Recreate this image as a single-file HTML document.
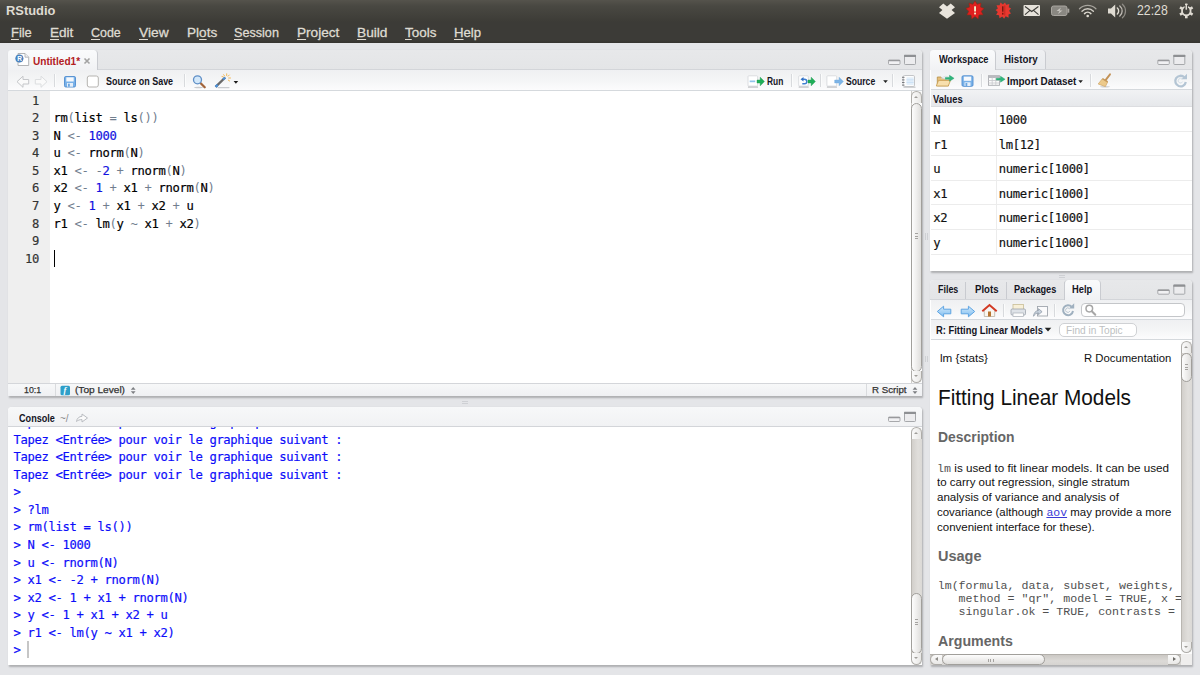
<!DOCTYPE html>
<html><head><meta charset="utf-8"><title>RStudio</title>
<style>
*{box-sizing:border-box;margin:0;padding:0}
html,body{width:1200px;height:675px;overflow:hidden}
body{background:#e4e5e8;font-family:"Liberation Sans",sans-serif;position:relative;color:#000}
.abs{position:absolute}
#top{left:0;top:0;width:1200px;height:42.700px;background:linear-gradient(#55534c 0,#494842 6px,#3d3c37 21px,#3c3b37 22px,#3c3b37 40px,#34332f 100%)}
#title{left:5.800px;top:2.500px;font-weight:bold;font-size:12.8px;line-height:15px;color:#dfdbd2;white-space:nowrap;display:inline-block}
.menu{top:24.500px;font-size:13.2px;line-height:15px;color:#dfdbd2;white-space:nowrap;display:inline-block;-webkit-text-stroke:.3px #dfdbd2}
.menu u{text-decoration:underline;text-underline-offset:2px}
.pane{background:#fff;border-radius:4px 4px 0 0;box-shadow:1px 1.500px 2px rgba(0,0,0,.24)}
.hdr{left:0;top:0;right:0;height:19.500px;background:linear-gradient(#e7e8ea,#e4e5e7);border-radius:4px 4px 0 0;border-bottom:1px solid #d3d5d9}
.tab{top:0;height:20px;background:linear-gradient(#fafbfc,#f1f2f4);border-radius:4px 4px 0 0;border-right:1px solid #c9cbd0;font-weight:bold;font-size:10.5px;white-space:nowrap;line-height:19px}
.itab{top:2px;height:17px;font-weight:bold;font-size:10.5px;white-space:nowrap;line-height:16px;border-right:1px solid #c9cbd0}
.tb{left:0;right:0;background:linear-gradient(#eff0f2,#f4f5f6 50%,#fcfcfd);border-bottom:1px solid #d5d9dd}
.tbt{font-weight:bold;font-size:10.3px;white-space:nowrap;display:inline-block;line-height:12px;margin-top:0px;color:#14141e}
.sep{width:2px;background:linear-gradient(to right,#d8dadd 50%,#fbfcfc 50%)}
.mono{font-family:"DejaVu Sans Mono","Liberation Mono",monospace}
.code{font-family:"DejaVu Sans Mono","Liberation Mono",monospace;font-size:12.2px;letter-spacing:-0.345px;white-space:pre;line-height:17.55px;-webkit-text-stroke:.18px currentColor}
.ht{font-size:11.6px;line-height:14px;white-space:nowrap;display:inline-block;color:#111}
.hh{font-weight:bold;font-size:14.5px;line-height:17px;color:#666}
.hc{font-family:"Liberation Mono",monospace;font-size:11.63px}
.hcode{white-space:pre;line-height:13.1px;color:#505050}
.vtrack{width:11px;background:linear-gradient(to right,#d2cfcb,#e0dedb 60%,#dbd9d6);border-left:1px solid #b9b6b1}
.vthumb{width:11px;background:linear-gradient(to right,#fdfdfd,#efeeed 50%,#dfdedc);border:1px solid #a19f9b;border-radius:5.5px}
.vbtn{width:11px;height:12px;background:linear-gradient(to right,#fbfbfb,#e9e8e6);border:1px solid #aeaca8}
.vbtn.up{border-radius:5.5px 5.5px 0 0;border-bottom:none}
.vbtn.dn{border-radius:0 0 5.5px 5.5px;border-top:none}
.grip{width:3px;height:7px;background:linear-gradient(#a5a3a0 0,#a5a3a0 1px,transparent 1px,transparent 2.700px,#a5a3a0 2.700px,#a5a3a0 3.700px,transparent 3.700px,transparent 5.400px,#a5a3a0 5.400px,#a5a3a0 6.400px,transparent 6.400px)}
.arr{width:0;height:0;border-left:2.500px solid transparent;border-right:2.500px solid transparent}
.arr.u{border-bottom:2.600px solid #a09e9a}
.arr.d{border-top:2.600px solid #a09e9a}
.sbt{font-size:9.6px;line-height:12px;white-space:nowrap;display:inline-block;color:#333;-webkit-text-stroke:.25px #333}
.num{color:#1212e0}
.op{color:#717e8e;-webkit-text-stroke:0}
.cons{color:#0d0dfa}
</style></head><body>

<div id="top" class="abs"></div>
<div id="title" class="abs" style="transform-origin:0 50%;transform:scaleX(1.0072);">RStudio</div>
<div class="abs menu" style="transform-origin:0 50%;transform:scaleX(0.9781);left:11.2px"><u>F</u>ile</div>
<div class="abs menu" style="transform-origin:0 50%;transform:scaleX(1.0293);left:50.3px"><u>E</u>dit</div>
<div class="abs menu" style="transform-origin:0 50%;transform:scaleX(0.9446);left:91.4px"><u>C</u>ode</div>
<div class="abs menu" style="transform-origin:0 50%;transform:scaleX(1.0437);left:139.3px"><u>V</u>iew</div>
<div class="abs menu" style="transform-origin:0 50%;transform:scaleX(1.0292);left:187.2px">Pl<u>o</u>ts</div>
<div class="abs menu" style="transform-origin:0 50%;transform:scaleX(0.9569);left:234.3px"><u>S</u>ession</div>
<div class="abs menu" style="transform-origin:0 50%;transform:scaleX(1.0330);left:296.9px"><u>P</u>roject</div>
<div class="abs menu" style="transform-origin:0 50%;transform:scaleX(1.0400);left:356.9px"><u>B</u>uild</div>
<div class="abs menu" style="transform-origin:0 50%;transform:scaleX(1.0196);left:404.6px"><u>T</u>ools</div>
<div class="abs menu" style="transform-origin:0 50%;transform:scaleX(0.9985);left:453.8px"><u>H</u>elp</div>
<div class="abs" style="transform-origin:0 50%;transform:scaleX(0.8919);left:1136.600px;top:2.500px;font-size:13.8px;line-height:16px;color:#dfdbd2;display:inline-block;white-space:nowrap">22:28</div>
<svg class="abs" style="left:936px;top:0" width="264" height="22" viewBox="936 0 264 22">
  <!-- dropbox -->
  <path d="M939 7.200L943.300 3.500L947 6.400L950.700 3.500L955 7.200L951.600 10.100L955 13L947 18.700L939 13L942.400 10.100Z" fill="#e8e4dc"/>
  <!-- red burst 1 -->
  <path d="M975.0 0.9L977.2 4.3L981.0 3.1L980.5 7.0L984.2 8.6L981.2 11.3L983.1 14.8L979.0 15.0L978.2 18.9L975.0 16.5L971.8 18.9L971.0 15.0L966.9 14.9L968.8 11.3L965.8 8.6L969.5 7.1L969.0 3.1L972.8 4.3z" fill="#de1f1f" stroke="#8c2a14" stroke-width=".6"/>
  <rect x="974.100" y="6.300" width="1.900" height="5.200" fill="#f4ecc9"/><rect x="974.100" y="12.600" width="1.900" height="1.800" fill="#f4ecc9"/>
  <!-- red burst 2 -->
  <path d="M1005.0 2.4L1006.2 4.8L1009.4 4.0L1008.7 7.3L1011.1 8.6L1009.1 10.8L1011.0 13.4L1008.5 14.4L1008.6 17.7L1005.6 16.3L1004.1 18.7L1002.3 16.5L999.5 18.2L999.0 15.3L996.1 14.8L997.8 11.9L995.6 10.0L997.8 8.4L996.5 5.2L999.6 5.3L1000.5 2.6L1002.9 4.5z" fill="#e8382f"/>
  <rect x="1002" y="6.300" width="1.500" height="5.400" fill="#7a1a12"/><rect x="1002" y="12.800" width="1.500" height="1.800" fill="#7a1a12"/>
  <rect x="1004.200" y="5.500" width="1.100" height="10" fill="#c92a22"/>
  <!-- mail -->
  <rect x="1023.500" y="5" width="16.500" height="11" rx="1" fill="#e6e2da"/>
  <path d="M1025 6.500l6.700 5 6.700-5M1025 14.700l4.700-4M1038.500 14.700l-4.700-4" stroke="#3c3b37" stroke-width="1.100" fill="none"/>
  <!-- battery -->
  <rect x="1051.500" y="6" width="15.500" height="9.500" rx="2" fill="#8a8882" stroke="#a9a6a0" stroke-width="1"/>
  <rect x="1067.500" y="8.700" width="1.800" height="4" fill="#a9a6a0"/>
  <path d="M1061 7.500l-4.500 3.500h3l-1.500 3 4.500-3.500h-3z" fill="#c9c6c0"/>
  <!-- wifi -->
  <g fill="none" stroke="#dfdbd2" stroke-linecap="round">
   <path d="M1079.500 8.800a11.500 11.500 0 0 1 16.400 0" stroke-width="1.300" stroke="#a7a49d"/>
   <path d="M1082 11.200a8 8 0 0 1 11.400 0" stroke-width="1.400" stroke="#cfcbc3"/>
   <path d="M1084.500 13.600a4.600 4.600 0 0 1 6.400 0" stroke-width="1.500"/>
  </g>
  <circle cx="1087.700" cy="16" r="1.300" fill="#dfdbd2"/>
  <!-- volume -->
  <path d="M1108 8.500h3l4.200-4v13l-4.200-4h-3z" fill="#dfdbd2"/>
  <g fill="none" stroke-linecap="round">
   <path d="M1117.300 8a4 4 0 0 1 0 6" stroke="#dfdbd2" stroke-width="1.400"/>
   <path d="M1119.800 6a6.500 6.500 0 0 1 0 10" stroke="#c0bcb5" stroke-width="1.300"/>
   <path d="M1122.400 4.200a9 9 0 0 1 0 13.600" stroke="#8f8c86" stroke-width="1.200"/>
  </g>
  <!-- gear/power -->
  <g transform="translate(1186.300,11)">
   <g fill="#dfdbd2"><rect x="-1.300" y="-7.300" width="2.600" height="4"/>
   <g transform="rotate(60)"><rect x="-1.300" y="-7.300" width="2.600" height="3.500"/></g>
   <g transform="rotate(120)"><rect x="-1.300" y="-7.300" width="2.600" height="3.500"/></g>
   <g transform="rotate(180)"><rect x="-1.300" y="-7.300" width="2.600" height="3.500"/></g>
   <g transform="rotate(240)"><rect x="-1.300" y="-7.300" width="2.600" height="3.500"/></g>
   <g transform="rotate(300)"><rect x="-1.300" y="-7.300" width="2.600" height="3.500"/></g></g>
   <circle r="4.300" fill="none" stroke="#dfdbd2" stroke-width="1.800"/>
   <rect x="-1.700" y="-6" width="3.400" height="5" fill="#3f3e39"/>
   <rect x="-.8" y="-7.300" width="1.600" height="6" fill="#dfdbd2"/>
  </g>
</svg>

<div class="abs" style="left:462px;top:401px;width:6px;height:4px;background:repeating-linear-gradient(#c9cbcf 0,#c9cbcf 1px,transparent 1px,transparent 2px);opacity:.8"></div>
<div class="abs" style="left:1059px;top:274.500px;width:6px;height:4px;background:repeating-linear-gradient(#c9cbcf 0,#c9cbcf 1px,transparent 1px,transparent 2px);opacity:.8"></div>
<div class="abs" style="left:925px;top:233px;width:3px;height:7px;background:repeating-linear-gradient(to right,#c9cbcf 0,#c9cbcf 1px,transparent 1px,transparent 2px);opacity:.8"></div>
<div class="abs" style="left:925px;top:356px;width:3px;height:6px;background:repeating-linear-gradient(to right,#c9cbcf 0,#c9cbcf 1px,transparent 1px,transparent 2px);opacity:.8"></div>
<!-- SOURCE PANE -->
<div id="src" class="abs pane" style="left:8px;top:50px;width:914px;height:346px">
  <div class="abs hdr"></div>
  <div class="abs tab" style="left:0;width:90px"></div>
  <div class="abs tbt" style="transform-origin:0 50%;transform:scaleX(0.9800);left:24.600px;top:5.600px;color:#b3201f">Untitled1*</div>
  <div class="abs tb" style="top:20px;height:21px"></div>
  <div class="abs tbt" style="transform-origin:0 50%;transform:scaleX(0.8684);left:97.500px;top:25.500px">Source on Save</div>
  <div class="abs tbt" style="transform-origin:0 50%;transform:scaleX(0.8144);left:759px;top:25.500px">Run</div>
  <div class="abs tbt" style="transform-origin:0 50%;transform:scaleX(0.8362);left:838px;top:25.500px">Source</div>
  <div class="abs sep" style="left:46px;top:24px;height:13px"></div>
  <div class="abs sep" style="left:176px;top:24px;height:13px"></div>
  <div class="abs sep" style="left:783px;top:24px;height:13px"></div>
  <div class="abs sep" style="left:812px;top:24px;height:13px"></div>
  <div class="abs sep" style="left:884px;top:24px;height:13px"></div>
  <svg class="abs" style="left:0;top:0" width="914" height="42" viewBox="8 50 914 42">
    <!-- tab doc icon -->
    <path d="M18 53.500h7l3.700 3.700v8.300h-10.700z" fill="#fff" stroke="#a9abae" stroke-width=".9"/>
    <path d="M25 53.500v3.700h3.700" fill="#eef0f2" stroke="#a9abae" stroke-width=".8"/>
    <circle cx="19.400" cy="58.500" r="3.800" fill="#4a86c5" stroke="#3a6ea8" stroke-width=".5"/>
    <text x="17.300" y="61" font-family="Liberation Sans,sans-serif" font-weight="bold" font-size="6.500" fill="#fff">R</text>
    <!-- tab close x -->
    <path d="M84.500 58.500l5 5M89.500 58.500l-5 5" stroke="#a3a3a3" stroke-width="1.600"/>
    <!-- back / fwd arrows -->
    <path d="M17 81.700l6-5.500v3.300h5.700v4.500h-5.700v3.300z" fill="#fafafa" stroke="#c4c6c9" stroke-width="1"/>
    <path d="M47 81.700l-6-5.500v3.300h-5.700v4.500h5.700v3.300z" fill="#fafafa" stroke="#dcdee0" stroke-width="1"/>
    <!-- save -->
    <g id="floppy">
    <rect x="64.500" y="76.500" width="11" height="10.500" rx="1.300" fill="#79b1e8" stroke="#4f8ccf" stroke-width=".9"/>
    <rect x="66.300" y="77.300" width="7.400" height="4.200" fill="#f6f9fd"/>
    <rect x="67" y="83" width="6" height="3.700" fill="#e6eff9"/>
    <rect x="68" y="83.700" width="1.800" height="3" fill="#6aa5e0"/>
    </g>
    <!-- checkbox -->
    <rect x="87.300" y="76" width="11" height="11" rx="2" fill="#fff" stroke="#b5b3b0" stroke-width="1"/>
    <!-- magnifier -->
    <ellipse cx="198.500" cy="87.500" rx="4.500" ry=".8" fill="#c9cbce"/>
    <path d="M200.700 83.200l4 4" stroke="#a2643a" stroke-width="2.300" stroke-linecap="round"/>
    <circle cx="197.500" cy="79.800" r="4" fill="#d3e8fa" stroke="#5f8fc6" stroke-width="1.300"/>
    <!-- wand -->
    <path d="M218 87.600h11" stroke="#c9cbce" stroke-width="1.200" stroke-linecap="round"/>
    <path d="M215.600 86.800l9.600-9.300" stroke="#6a6a6a" stroke-width="2.400"/>
    <path d="M215.600 86.800l2-1.900M223.200 79.400l2-1.900" stroke="#4a90da" stroke-width="2.400"/>
    <g stroke="#f0b145" stroke-width=".9" stroke-linecap="round">
      <path d="M226.700 73.800v1.800M229.300 75l-1.200 1.200M230.500 78h-1.800M223.600 74.700l1 1.300M229.600 81l-1.300-.9M222 76.500l1.300.4"/>
    </g>
    <path d="M233.600 81h4.600l-2.300 2.700z" fill="#1a1a1a"/>
    <!-- min/max -->
    <g id="minmax">
    <rect x="888.500" y="60.300" width="11.500" height="4.200" rx="1" fill="#f1f1f3" stroke="#a7a8ab" stroke-width="1"/>
    <rect x="888.300" y="59.800" width="11.900" height="1.500" rx=".6" fill="#98999c"/>
    <rect x="904.500" y="55.500" width="11" height="9" rx=".8" fill="#ececee" stroke="#a6a8ab" stroke-width="1"/>
    <rect x="904" y="54.700" width="12" height="2.300" rx=".5" fill="#8e9093"/>
    </g>
    <!-- run -->
    <path d="M748.500 87h9" stroke="#a9abaf" stroke-width="1.200" stroke-linecap="round"/>
    <rect x="748" y="75.800" width="9.600" height="10.300" rx=".8" fill="#fff" stroke="#d3d5d9" stroke-width=".8"/>
    <rect x="749.700" y="80.500" width="5.500" height="1.700" fill="#8fc3ea"/>
    <path d="M757 80h3.200v-2.800l4.200 4.300-4.200 4.300v-2.800h-3.200z" fill="#1fae58" stroke="#159347" stroke-width=".4"/>
    <!-- rerun -->
    <path d="M799.200 87h9" stroke="#a9abaf" stroke-width="1.200" stroke-linecap="round"/>
    <rect x="798.700" y="75.800" width="9.600" height="10.300" rx=".8" fill="#fff" stroke="#d3d5d9" stroke-width=".8"/>
    <path d="M802.300 83.800h2.200a2.300 2.300 0 0 0 0-4.600h-1.800" fill="none" stroke="#3f7fd0" stroke-width="1.400"/>
    <path d="M803.500 77l-3 2.200 3 2.200z" fill="#2f6fc4"/>
    <path d="M808 80h3.200v-2.800l4.200 4.300-4.200 4.300v-2.800h-3.200z" fill="#1fae58" stroke="#159347" stroke-width=".4"/>
    <!-- source -->
    <path d="M827.400 87h9" stroke="#a9abaf" stroke-width="1.200" stroke-linecap="round"/>
    <rect x="826.900" y="75.800" width="9.800" height="10.300" rx=".8" fill="#fff" stroke="#d3d5d9" stroke-width=".8"/>
    <path d="M834.700 80h4.400v-2.800l4.300 4.300-4.300 4.300v-2.800h-4.400z" fill="#7db4e6" stroke="#6ea8dc" stroke-width=".4"/>
    <path d="M883.200 80.300h4.600l-2.300 2.800z" fill="#222"/>
    <!-- notebook -->
    <path d="M904 87.200h11" stroke="#c3c5c8" stroke-width="1.200" stroke-linecap="round"/>
    <rect x="903.200" y="75.500" width="11.300" height="11" rx="1.300" fill="#fdfdfd" stroke="#bdbfc3" stroke-width=".9"/>
    <rect x="906.500" y="77.300" width="7.200" height="7.700" fill="#e3effa"/>
    <path d="M906.500 79.800h7.200M906.500 82.400h7.200" stroke="#c5dcf2" stroke-width=".8"/>
    <path d="M902 77.300h2.500M902 79.900h2.500M902 82.500h2.500M902 85.100h2.500" stroke="#77797d" stroke-width="1"/>
  </svg>
  <div class="abs" style="left:0;top:41px;width:42px;height:292px;background:#efefef"></div>
  <div class="abs code" style="left:0;top:42.700px;width:31px;text-align:right;color:#333">1
2
3
4
5
6
7
8
9
10</div>
  <div class="abs code" style="left:45.600px;top:42.700px">
rm<span class="op">(</span>list <span class="op">=</span> ls<span class="op">())</span>
N <span class="op">&lt;-</span> <span class="num">1000</span>
u <span class="op">&lt;-</span> rnorm<span class="op">(</span>N<span class="op">)</span>
x1 <span class="op">&lt;-</span> <span class="op">-</span><span class="num">2</span> <span class="op">+</span> rnorm<span class="op">(</span>N<span class="op">)</span>
x2 <span class="op">&lt;-</span> <span class="num">1</span> <span class="op">+</span> x1 <span class="op">+</span> rnorm<span class="op">(</span>N<span class="op">)</span>
y <span class="op">&lt;-</span> <span class="num">1</span> <span class="op">+</span> x1 <span class="op">+</span> x2 <span class="op">+</span> u
r1 <span class="op">&lt;-</span> lm<span class="op">(</span>y <span class="op">~</span> x1 <span class="op">+</span> x2<span class="op">)</span>

</div>
  <div class="abs" style="left:46px;top:200px;width:1px;height:17px;background:#000"></div>
  <div class="abs vtrack" style="left:903px;top:41px;height:292px;background:#fbfbfb;border-left-color:#cfcdca"></div>
  <div class="abs vbtn up" style="left:903px;top:41px"></div><div class="abs arr u" style="left:906px;top:46px"></div>
  <div class="abs vthumb" style="left:903px;top:52.500px;height:269px"></div>
  <div class="abs grip" style="left:907px;top:183px"></div>
  <div class="abs vbtn dn" style="left:903px;top:321px"></div><div class="abs arr d" style="left:906px;top:325px"></div>
  <div class="abs" style="left:0;top:333px;right:0;height:13px;background:linear-gradient(#f7f8f9,#eff0f3);border-top:1px solid #d4d6da"></div>
  <div class="abs sbt" style="transform-origin:0 50%;transform:scaleX(0.9204);left:15.600px;top:334.300px">10:1</div>
  <div class="abs" style="left:47px;top:334px;height:12px;width:1px;background:#d9dbde"></div>
  <div class="abs sbt" style="transform-origin:0 50%;transform:scaleX(1.0533);left:67px;top:334.300px">(Top Level)</div>
  <div class="abs" style="left:858px;top:334px;height:12px;width:1px;background:#d9dbde"></div>
  <div class="abs sbt" style="transform-origin:0 50%;transform:scaleX(1.0110);left:863.500px;top:334.300px">R Script</div>
  <svg class="abs" style="left:0;top:333px" width="914" height="14" viewBox="8 383 914 14">
    <rect x="60.500" y="385.700" width="9.500" height="9.500" rx="1.500" fill="#2e9fc9"/>
    <text x="63.500" y="393.300" font-family="Liberation Serif,serif" font-style="italic" font-weight="bold" font-size="8.500" fill="#fff">f</text>
    <path d="M130.800 389.700h4.800l-2.400-2.700z M130.800 391.300h4.800l-2.400 2.700z" fill="#7d7f83"/>
    <path d="M912.600 389.700h4.800l-2.400-2.700z M912.600 391.300h4.800l-2.400 2.700z" fill="#7d7f83"/>
  </svg>
</div>

<!-- CONSOLE PANE -->
<div id="con" class="abs pane" style="left:8px;top:407px;width:914px;height:258px">
  <div class="abs hdr" style="background:linear-gradient(#f7f8f9,#f1f2f4)"></div>
  <div class="abs tbt" style="transform-origin:0 50%;transform:scaleX(0.8837);left:10.600px;top:6.2px">Console</div>
  <div class="abs tbt" style="transform-origin:0 50%;transform:scaleX(0.9690);left:52px;top:6.2px;font-weight:normal;color:#8a8a8a">~/</div>
  <svg class="abs" style="left:0;top:0" width="914" height="20" viewBox="8 407 914 20">
    <g transform="translate(0,357)"><use href="#minmax"/></g>
    <path d="M76.500 421.500c.5-3.300 2.600-5 5.500-5.200v-2.300l5.500 4-5.500 4v-2.400c-2.300 0-4 .5-5.500 1.900z" fill="#fbfbfb" stroke="#b9bcc1" stroke-width="1"/>
  </svg>
  <div class="abs" style="left:0;top:20px;width:903px;height:238px;overflow:hidden">
    <div class="abs code cons" style="left:5.600px;top:-12.800px">Tapez &lt;Entrée&gt; pour voir le graphique suivant :
Tapez &lt;Entrée&gt; pour voir le graphique suivant :
Tapez &lt;Entrée&gt; pour voir le graphique suivant :
Tapez &lt;Entrée&gt; pour voir le graphique suivant :
&gt; 
&gt; ?lm
&gt; rm(list = ls())
&gt; N &lt;- 1000
&gt; u &lt;- rnorm(N)
&gt; x1 &lt;- -2 + rnorm(N)
&gt; x2 &lt;- 1 + x1 + rnorm(N)
&gt; y &lt;- 1 + x1 + x2 + u
&gt; r1 &lt;- lm(y ~ x1 + x2)
&gt; </div>
    <div class="abs" style="left:19.200px;top:214px;width:2px;height:17px;background:#c6c6c6"></div>
  </div>
  <div class="abs vtrack" style="left:903px;top:20px;height:238px"></div>
  <div class="abs" style="left:903px;top:20px;width:11px;height:6px;background:#fcfcfc"></div><div class="abs" style="left:903px;top:252px;width:11px;height:6px;background:#fcfcfc"></div>
  <div class="abs vbtn up" style="left:903px;top:20px"></div><div class="abs arr u" style="left:906px;top:25px"></div>
  <div class="abs vthumb" style="left:903px;top:186px;height:60.500px"></div>
  <div class="abs grip" style="left:907px;top:212px"></div>
  <div class="abs vbtn dn" style="left:903px;top:246px;height:11.500px"></div><div class="abs arr d" style="left:906px;top:250px"></div>
</div>

<!-- WORKSPACE PANE -->
<div id="ws" class="abs pane" style="left:930px;top:50px;width:262px;height:221px">
  <div class="abs hdr"></div>
  <div class="abs" style="left:1px;top:0;width:261px;height:220px">
  <div class="abs tab" style="left:-1px;width:66px"></div>
  <div class="abs tbt" style="transform-origin:0 50%;transform:scaleX(0.9039);left:7.500px;top:4.2px">Workspace</div>
  <div class="abs itab" style="left:65px;width:50px;background:linear-gradient(#eff0f2,#e8eaed);border-radius:0 4px 0 0;top:0;height:19px"></div>
  <div class="abs tbt" style="transform-origin:0 50%;transform:scaleX(0.9497);left:73.300px;top:4.2px">History</div>
  <div class="abs tb" style="top:20px;height:20px"></div>
  <div class="abs tbt" style="transform-origin:0 50%;transform:scaleX(0.9626);left:76px;top:25.8px">Import Dataset</div>
  <div class="abs sep" style="left:50px;top:24px;height:13px"></div>
  <div class="abs sep" style="left:159px;top:24px;height:13px"></div>
  <div class="abs" style="left:0;top:40px;width:261px;height:17px;background:linear-gradient(#f1f2f4,#e6e8eb);border-bottom:1px solid #dcdde0"></div>
  <div class="abs tbt" style="transform-origin:0 50%;transform:scaleX(0.9068);left:2.400px;top:44.1px">Values</div>
  <div class="abs" style="left:0;top:57.0px;width:261px;height:24.6px;border-bottom:1px solid #ececec"></div>
  <div class="abs code" style="left:2.300px;top:62.0px;color:#111">N</div>
  <div class="abs code" style="left:67.800px;top:62.0px;color:#111">1000</div>
  <div class="abs" style="left:0;top:81.6px;width:261px;height:24.6px;border-bottom:1px solid #ececec"></div>
  <div class="abs code" style="left:2.300px;top:86.6px;color:#111">r1</div>
  <div class="abs code" style="left:67.800px;top:86.6px;color:#111">lm[12]</div>
  <div class="abs" style="left:0;top:106.2px;width:261px;height:24.6px;border-bottom:1px solid #ececec"></div>
  <div class="abs code" style="left:2.300px;top:111.2px;color:#111">u</div>
  <div class="abs code" style="left:67.800px;top:111.2px;color:#111">numeric[1000]</div>
  <div class="abs" style="left:0;top:130.8px;width:261px;height:24.6px;border-bottom:1px solid #ececec"></div>
  <div class="abs code" style="left:2.300px;top:135.8px;color:#111">x1</div>
  <div class="abs code" style="left:67.800px;top:135.8px;color:#111">numeric[1000]</div>
  <div class="abs" style="left:0;top:155.4px;width:261px;height:24.6px;border-bottom:1px solid #ececec"></div>
  <div class="abs code" style="left:2.300px;top:160.4px;color:#111">x2</div>
  <div class="abs code" style="left:67.800px;top:160.4px;color:#111">numeric[1000]</div>
  <div class="abs" style="left:0;top:180.0px;width:261px;height:24.6px;border-bottom:1px solid #ececec"></div>
  <div class="abs code" style="left:2.300px;top:185.0px;color:#111">y</div>
  <div class="abs code" style="left:67.800px;top:185.0px;color:#111">numeric[1000]</div>
  <div class="abs" style="left:65px;top:57px;width:1px;height:148px;background:#ececec"></div>
  <svg class="abs" style="left:0;top:0" width="261" height="42" viewBox="931 50 261 42">
    <g transform="translate(269.300,0)"><use href="#minmax"/></g>
    <!-- open folder -->
    <path d="M937.300 85.800v-8.800h3.800l1.200 1.400h6.200v7.400z" fill="#e6bf7a" stroke="#b88f45" stroke-width=".8"/>
    <path d="M941 78l4.500-1.800 3 .8v3z" fill="#f3f6fa" stroke="#c9ced6" stroke-width=".5"/>
    <path d="M936.300 86l2.200-5.600h12l-2.200 5.600z" fill="#f7dfad" stroke="#c79c4f" stroke-width=".8"/>
    <path d="M945.300 77.400h4.200v-2.100l4.600 3-4.600 3v-2.100h-4.200z" fill="#2fb57c" stroke="#1f9a63" stroke-width=".4"/>
    <!-- save -->
    <g transform="translate(897.500,-.7)"><use href="#floppy"/></g>
    <!-- import -->
    <rect x="988.500" y="75.700" width="11" height="9.600" fill="#fbfbfb" stroke="#a9abaf" stroke-width=".9"/>
    <rect x="988.500" y="75.700" width="11" height="2.300" fill="#b9bbbf"/>
    <path d="M988.500 80.500h11M988.500 83h11M992.200 77.500v7.800M995.800 77.500v7.800" stroke="#c6c8cc" stroke-width=".8"/>
    <path d="M996.300 78.300h4.200v-2.100l4.600 3-4.600 3v-2.100h-4.200z" fill="#2fb57c" stroke="#1f9a63" stroke-width=".4"/>
    <path d="M1078.300 80.300h4.600l-2.300 2.800z" fill="#222"/>
    <!-- broom -->
    <ellipse cx="1105" cy="86.700" rx="5" ry=".7" fill="#cfd1d4"/>
    <path d="M1110 74.300l-4.600 6" stroke="#c39257" stroke-width="1.900" stroke-linecap="round"/>
    <path d="M1102.300 78.800l5.300 3.200-2.200 4.600-7.200-2.600z" fill="#ecca8c" stroke="#cfa566" stroke-width=".7"/>
    <path d="M1102.500 78.700l5.200 3.200" stroke="#c79a5c" stroke-width="1.400"/>
    <!-- refresh -->
    <path d="M1184.300 77.300a5.300 5.300 0 1 0 1.500 4.700" fill="none" stroke="#b4c5d4" stroke-width="2.300"/>
    <path d="M1187 73.800v5.500h-5.500z" fill="#b4c5d4"/>
    <path d="M1182.300 79.300a2.300 2.300 0 1 0 .3 2.300" fill="none" stroke="#d3dde6" stroke-width="1"/>
  </svg>
</div>

</div>
<!-- HELP PANE -->
<div id="help" class="abs pane" style="left:930px;top:280px;width:262px;height:385px">
  <div class="abs hdr"></div>
  <div class="abs" style="left:1px;top:0;width:261px;height:385px">
  <div class="abs itab" style="left:0;width:35px"></div>
  <div class="abs itab" style="left:35px;width:40.500px"></div>
  <div class="abs itab" style="left:75.500px;width:58px"></div>
  <div class="abs tab" style="left:133px;width:36.500px;border-left:1px solid #c9cbd0"></div>
  <div class="abs tbt" style="transform-origin:0 50%;transform:scaleX(0.8650);left:7.300px;top:4.2px">Files</div>
  <div class="abs tbt" style="transform-origin:0 50%;transform:scaleX(0.9330);left:43.500px;top:4.2px">Plots</div>
  <div class="abs tbt" style="transform-origin:0 50%;transform:scaleX(0.8899);left:82.700px;top:4.2px">Packages</div>
  <div class="abs tbt" style="transform-origin:0 50%;transform:scaleX(0.9047);left:140.800px;top:4.2px">Help</div>
  <div class="abs tb" style="top:20px;height:20px"></div>
  <div class="abs tb" style="top:40px;height:20px"></div>
  <div class="abs sep" style="left:71.500px;top:24px;height:13px"></div>
  <div class="abs sep" style="left:123.300px;top:24px;height:13px"></div>
  <div class="abs" style="left:149.800px;top:22.500px;width:104px;height:14.500px;border:1px solid #c4c6c9;border-radius:4px;background:#fff"></div>
  <div class="abs tbt" style="transform-origin:0 50%;transform:scaleX(0.9115);left:4.600px;top:45.1px">R: Fitting Linear Models</div>
  <div class="abs" style="left:127.700px;top:42.700px;width:78.500px;height:14.500px;border:1px solid #cfd1d4;border-radius:5px;background:#fff"></div>
  <div class="abs tbt" style="transform-origin:0 50%;transform:scaleX(0.9839);left:134.700px;top:45.1px;font-weight:normal;color:#bdbfc2">Find in Topic</div>
  <svg class="abs" style="left:0;top:0" width="261" height="62" viewBox="931 280 261 62">
    <g transform="translate(269.300,229.700)"><use href="#minmax"/></g>
    <defs><linearGradient id="bl" x1="0" y1="0" x2="0" y2="1"><stop offset="0" stop-color="#d3eafb"/><stop offset="1" stop-color="#7fbdf0"/></linearGradient></defs>
    <!-- back/fwd -->
    <path d="M937.300 311.500l6.300-5.300v3h7.200v4.600h-7.200v3z" fill="url(#bl)" stroke="#5ea4e2" stroke-width="1"/>
    <path d="M974.700 311.500l-6.300-5.300v3h-7.200v4.600h7.200v3z" fill="url(#bl)" stroke="#5ea4e2" stroke-width="1"/>
    <!-- home -->
    <path d="M984.300 310.500v6h10.400v-6" fill="#fbf6ee" stroke="#b9b2a6" stroke-width=".8"/>
    <rect x="988" y="311.500" width="3" height="5" fill="#b8742f"/>
    <path d="M982.300 311.300l7.200-6.300 7.200 6.300" fill="none" stroke="#d23a24" stroke-width="2" stroke-linejoin="miter"/>
    <!-- printer -->
    <rect x="1013" y="304.500" width="10.500" height="5" fill="#f8f0d8" stroke="#c9bd97" stroke-width=".8"/>
    <rect x="1011" y="309" width="14.500" height="6" rx="1.200" fill="#dfe3e8" stroke="#9aa1ab" stroke-width=".8"/>
    <rect x="1013" y="313" width="10.500" height="3.500" fill="#fdfdfd" stroke="#a8aeb6" stroke-width=".7"/>
    <!-- popout -->
    <rect x="1037.500" y="306.500" width="10" height="9.500" fill="#fbfbfc" stroke="#a0a6ae" stroke-width=".9"/>
    <path d="M1033.500 316.300c.3-3.500 2-5.500 5-5.800v-1.800l3.600 3-3.600 3v-1.800c-2 0-3.600 1-5 3.400z" fill="#c9d3de" stroke="#8893a0" stroke-width=".7"/>
    <!-- refresh -->
    <path d="M1071.800 306.800a5 5 0 1 0 1.200 4.200" fill="none" stroke="#9fb0bf" stroke-width="2"/>
    <path d="M1074.200 303.300v5.200h-5.200z" fill="#9fb0bf"/>
    <path d="M1069.500 308.800a2.200 2.200 0 1 0 .3 2.200" fill="none" stroke="#b9c5d0" stroke-width="1"/>
    <!-- search icon -->
    <circle cx="1089.300" cy="308.600" r="3.300" fill="none" stroke="#a6a6a6" stroke-width="1.500"/>
    <path d="M1091.800 311.200l3.500 3.500" stroke="#a6a6a6" stroke-width="2" stroke-linecap="round"/>
    <!-- dropdown -->
    <path d="M1044.700 327.700h6.600l-3.300 3.800z" fill="#222"/>
  </svg>
  <!-- help content -->
  <div class="abs" style="left:0;top:60px;width:251px;height:313px;overflow:hidden;background:#fff">
    <div class="abs ht" style="transform-origin:0 50%;transform:scaleX(1.0066);left:9px;top:11px">lm {stats}</div>
    <div class="abs ht" style="transform-origin:0 50%;transform:scaleX(0.9746);left:152.500px;top:11px">R Documentation</div>
    <div class="abs ht" style="transform-origin:0 50%;transform:scaleX(0.9286);left:6.600px;top:45.100px;font-size:22.4px;line-height:26px">Fitting Linear Models</div>
    <div class="abs ht hh" style="transform-origin:0 50%;transform:scaleX(0.9591);left:6.800px;top:88.500px">Description</div>
    <div class="abs ht" style="transform-origin:0 50%;transform:scaleX(1.0065);left:6.300px;top:120.500px"><span class="hc" style="color:#555">lm</span> is used to fit linear models. It can be used</div>
    <div class="abs ht" style="transform-origin:0 50%;transform:scaleX(0.9935);left:6.300px;top:135px">to carry out regression, single stratum</div>
    <div class="abs ht" style="transform-origin:0 50%;transform:scaleX(0.9979);left:6.300px;top:150px">analysis of variance and analysis of</div>
    <div class="abs ht" style="transform-origin:0 50%;transform:scaleX(0.9870);left:6.300px;top:165px">covariance (although <span class="hc" style="color:#3a3ad6;text-decoration:underline">aov</span> may provide a more</div>
    <div class="abs ht" style="transform-origin:0 50%;transform:scaleX(0.9907);left:6.300px;top:180px">convenient interface for these).</div>
    <div class="abs ht hh" style="transform-origin:0 50%;transform:scaleX(0.9993);left:6.600px;top:208.300px">Usage</div>
    <div class="abs hc hcode" style="left:6.700px;top:238.600px">lm(formula, data, subset, weights, na.action,
   method = "qr", model = TRUE, x = FALSE, y = FALSE, qr = TRUE,
   singular.ok = TRUE, contrasts = NULL, offset, ...)</div>
    <div class="abs ht hh" style="transform-origin:0 50%;transform:scaleX(0.9772);left:6.600px;top:292.800px">Arguments</div>
  </div>
    <div class="abs vtrack" style="left:250px;top:60.500px;height:313px"></div>
    <div class="abs" style="left:250px;top:60.500px;width:11px;height:6px;background:#fcfcfc"></div><div class="abs" style="left:250px;top:367.500px;width:11px;height:6px;background:#fcfcfc"></div>
    <div class="abs vbtn up" style="left:250px;top:60.500px"></div><div class="abs arr u" style="left:253px;top:65.500px"></div>
    <div class="abs vthumb" style="left:250px;top:72.500px;height:29px"></div>
    <div class="abs grip" style="left:254px;top:83.500px"></div>
    <div class="abs vbtn dn" style="left:250px;top:361.500px;height:11.500px"></div><div class="abs arr d" style="left:253px;top:365.500px"></div>
    <div class="abs" style="left:-1px;top:373.500px;width:251px;height:11.500px;background:linear-gradient(#cbc8c4,#dcdad7 60%,#d6d4d1);border-top:1px solid #b3b0ab"></div>
    <div class="abs" style="left:-1px;top:373.500px;width:12px;height:11px;border:1px solid #aeaca8;border-right:none;border-radius:5.500px 0 0 5.500px;background:linear-gradient(#fbfbfb,#e9e8e6)"></div>
    <div class="abs" style="left:4px;top:376.500px;width:0;height:0;border-top:2.500px solid transparent;border-bottom:2.500px solid transparent;border-right:3px solid #8e8c88"></div>
    <div class="abs" style="left:10.500px;top:373.500px;width:103px;height:11px;border:1px solid #a19f9b;border-radius:5.500px;background:linear-gradient(#fdfdfd,#efeeed 50%,#dfdedc)"></div>
    <div class="abs grip" style="left:58px;top:377px;transform:rotate(90deg);transform-origin:1.500px 3.500px"></div>
    <div class="abs" style="left:237px;top:373.500px;width:12.500px;height:11px;border:1px solid #aeaca8;border-left:none;border-radius:0 5.500px 5.500px 0;background:linear-gradient(#fbfbfb,#e9e8e6)"></div>
    <div class="abs" style="left:241.500px;top:376.500px;width:0;height:0;border-top:2.500px solid transparent;border-bottom:2.500px solid transparent;border-left:3.500px solid #6e6c68"></div>
    <div class="abs" style="left:250px;top:373.500px;width:11px;height:11.500px;background:#efeeed"></div>
  </div>
</div>

</body></html>
